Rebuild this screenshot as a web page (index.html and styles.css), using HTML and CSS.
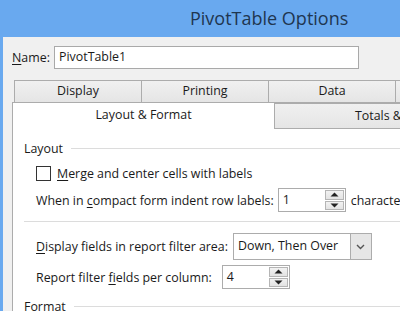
FILE: index.html
```html
<!DOCTYPE html>
<html>
<head>
<meta charset="utf-8">
<link rel="stylesheet" href="styles.css">
</head>
<body>
<div class="window">
  <div class="titlebar"><span class="title">PivotTable Options</span></div>
  <div class="body">
    <div class="name-row">
      <span class="name-label"><u>N</u>ame:</span>
      <div class="textbox name-box">PivotTable1</div>
    </div>
    <div class="tabs">
      <div class="tabrow row1">
        <div class="tab">Display</div>
        <div class="tab">Printing</div>
        <div class="tab">Data</div>
        <div class="tab tab-cut"></div>
      </div>
      <div class="tabrow row2">
        <div class="tab selected">Layout &amp; Format</div>
        <div class="tab tab-totals">Totals &amp; Filters</div>
      </div>
    </div>
    <div class="panel">
      <div class="group-head"><span>Layout</span><div class="group-line"></div></div>
      <div class="row check-row">
        <div class="checkbox"></div>
        <span><u>M</u>erge and center cells with labels</span>
      </div>
      <div class="row indent-row">
        <span>When in <u>c</u>ompact form indent row labels:</span>
        <div class="spin spin-indent"><span class="spin-val">1</span>
          <div class="spin-btns">
            <div class="spin-btn"><svg width="9" height="5" viewBox="0 0 9 5"><path d="M0.5 4.5 L4.5 0.5 L8.5 4.5 Z" fill="#222"/></svg></div>
            <div class="spin-btn"><svg width="9" height="5" viewBox="0 0 9 5"><path d="M0.5 0.5 L4.5 4.5 L8.5 0.5 Z" fill="#222"/></svg></div>
          </div>
        </div>
        <span class="after">characters</span>
      </div>
      <div class="separator"></div>
      <div class="row filter-row">
        <span><u>D</u>isplay fields in report filter area:</span>
        <div class="combo"><span class="combo-val">Down, Then Over</span>
          <div class="combo-btn"><svg width="9" height="6" viewBox="0 0 9 6"><path d="M1 1 L4.5 4.5 L8 1" fill="none" stroke="#555" stroke-width="1.4"/></svg></div>
        </div>
      </div>
      <div class="row percol-row">
        <span>Report filter <u>f</u>ields per column:</span>
        <div class="spin spin-col"><span class="spin-val">4</span>
          <div class="spin-btns">
            <div class="spin-btn"><svg width="9" height="5" viewBox="0 0 9 5"><path d="M0.5 4.5 L4.5 0.5 L8.5 4.5 Z" fill="#222"/></svg></div>
            <div class="spin-btn"><svg width="9" height="5" viewBox="0 0 9 5"><path d="M0.5 0.5 L4.5 4.5 L8.5 0.5 Z" fill="#222"/></svg></div>
          </div>
        </div>
      </div>
      <div class="group-head format-head"><span>Format</span><div class="group-line"></div></div>
    </div>
  </div>
</div>
</body>
</html>
```
FILE: styles.css
```css
html, body {
  margin: 0;
  padding: 0;
  width: 400px;
  height: 311px;
  overflow: hidden;
}
body {
  font-family: "Open Sans", "Noto Sans", sans-serif;
  font-size: 12.4px;
  color: #1a1a1a;
  background: #f0f0f0;
}
.window {
  width: 400px;
  height: 311px;
  display: flex;
  flex-direction: column;
  overflow: hidden;
}
.titlebar {
  height: 37px;
  flex: none;
  background: #69a9ef;
  display: flex;
  align-items: center;
  padding-left: 190px;
}
.title {
  font-size: 18px;
  color: #1f3650;
  line-height: 37px;
  margin-top: -1px;
  white-space: nowrap;
}
.body {
  flex: 1;
  border-left: 3px solid #69a9ef;
  background: #f0f0f0;
  display: flex;
  flex-direction: column;
  min-height: 0;
}
.name-row {
  display: flex;
  align-items: center;
  margin-top: 9px;
  padding-left: 9px;
  height: 23px;
}
.name-label {
  width: 42px;
}
.textbox {
  background: #fff;
  border: 1px solid #a9a9a9;
  box-sizing: border-box;
  height: 23px;
  line-height: 20px;
  padding-left: 4px;
}
.name-box {
  width: 305px;
}
.tabs {
  margin-top: 11px;
  display: flex;
  flex-direction: column;
}
.tabrow {
  display: flex;
  white-space: nowrap;
}
.row1 {
  padding-left: 11px;
  height: 22px;
}
.tab {
  box-sizing: border-box;
  border: 1px solid #acacac;
  background: linear-gradient(#f0f0f0, #e5e5e5);
  text-align: center;
  line-height: 20px;
  flex: none;
}
.row1 .tab {
  width: 128px;
  height: 23px;
  margin-right: -1px;
}
.row1 .tab-cut {
  width: 40px;
}
.row2 {
  padding-left: 9px;
  height: 26px;
  position: relative;
  z-index: 1;
}
.row2 .tab.selected {
  width: 263px;
  height: 27px;
  background: #fff;
  border-bottom: none;
  line-height: 24px;
}
.row2 .tab-totals {
  width: 140px;
  height: 26px;
  margin-left: -1px;
  margin-top: 1px;
  line-height: 23px;
  text-align: left;
  padding-left: 80px;
}
.panel {
  flex: 1;
  margin-left: 9px;
  background: #fff;
  border-left: 1px solid #acacac;
  border-top: 1px solid #acacac;
  padding-left: 11px;
  padding-top: 10px;
}
.group-head {
  display: flex;
  align-items: center;
  height: 18px;
}
.group-line {
  flex: 1;
  margin-left: 8px;
  border-top: 1px solid #dcdcdc;
}
.row {
  display: flex;
  align-items: center;
  padding-left: 12px;
  white-space: nowrap;
}
.row > * {
  flex: none;
}
.check-row {
  margin-top: 8px;
  height: 16px;
}
.checkbox {
  width: 13px;
  height: 13px;
  border: 1px solid #333;
  background: #fff;
  margin-right: 6px;
}
.indent-row {
  margin-top: 7px;
  height: 24px;
}
.spin {
  display: flex;
  box-sizing: border-box;
  border: 1px solid #acacac;
  height: 24px;
  background: #fff;
}
.spin-val {
  flex: 1;
  padding-left: 4px;
  line-height: 21px;
}
.spin-btns {
  width: 19px;
  display: flex;
  flex-direction: column;
  padding: 1px 1px 1px 0;
  gap: 1px;
}
.spin-btn {
  flex: 1;
  background: linear-gradient(#f2f2f2, #e3e3e3);
  border: 1px solid #b5b5b5;
  display: flex;
  align-items: center;
  justify-content: center;
}
.spin-indent {
  width: 68px;
  margin-left: 4px;
}
.after {
  margin-left: 5px;
}
.separator {
  margin-top: 9px;
  border-top: 1px solid #dcdcdc;
  height: 0;
}
.filter-row {
  margin-top: 11px;
  height: 27px;
}
.combo {
  display: flex;
  box-sizing: border-box;
  border: 1px solid #acacac;
  width: 139px;
  height: 27px;
  margin-left: 5px;
  background: #fff;
}
.combo-val {
  flex: 1;
  padding-left: 4px;
  line-height: 24px;
}
.combo-btn {
  width: 20px;
  background: #e6e6e6;
  border-left: 1px solid #acacac;
  display: flex;
  align-items: center;
  justify-content: center;
}
.percol-row {
  margin-top: 5px;
  height: 24px;
}
.spin-col {
  width: 68px;
  margin-left: 10px;
}
.format-head {
  margin-top: 8px;
}
u {
  text-decoration: underline;
  text-underline-offset: 2px;
}
```
